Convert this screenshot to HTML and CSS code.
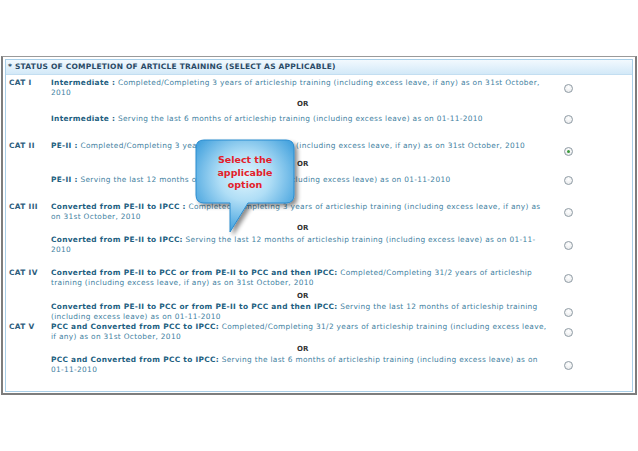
FILE: index.html
```html
<!DOCTYPE html>
<html>
<head>
<meta charset="utf-8">
<link rel="stylesheet" href="styles.css">
</head>
<body>
<div class="page">
  <div class="frame">
    <div class="box">
      <div class="head">* STATUS OF COMPLETION OF ARTICLE TRAINING (SELECT AS APPLICABLE)</div>
      <div class="rows">
        <div class="opt two mt3"><span class="cat">CAT I</span><p class="txt"><b>Intermediate :</b> Completed/Completing 3 years of articleship training (including excess leave, if any) as on 31st October,<br>2010</p><span class="radio"></span></div>
        <div class="or mt1">OR</div>
        <div class="opt mt5"><span class="cat"></span><p class="txt"><b>Intermediate :</b> Serving the last 6 months of articleship training (including excess leave) as on 01-11-2010</p><span class="radio"></span></div>

        <div class="opt two mt17"><span class="cat">CAT II</span><p class="txt top"><b>PE-II :</b> Completed/Completing 3 years of articleship training (including excess leave, if any) as on 31st October, 2010</p><span class="radio on"></span></div>
        <div class="or mtn2">OR</div>
        <div class="opt mt6"><span class="cat"></span><p class="txt"><b>PE-II :</b> Serving the last 12 months of articleship training (including excess leave) as on 01-11-2010</p><span class="radio"></span></div>

        <div class="opt two mt17"><span class="cat">CAT III</span><p class="txt"><b>Converted from PE-II to IPCC :</b> Completed/Completing 3 years of articleship training (including excess leave, if any) as<br>on 31st October, 2010</p><span class="radio"></span></div>
        <div class="or mt1">OR</div>
        <div class="opt two mt2"><span class="cat"></span><p class="txt"><b>Converted from PE-II to IPCC:</b> Serving the last 12 months of articleship training (including excess leave) as on 01-11-<br>2010</p><span class="radio"></span></div>

        <div class="opt two mt13"><span class="cat">CAT IV</span><p class="txt"><b>Converted from PE-II to PCC or from PE-II to PCC and then IPCC:</b> Completed/Completing 31/2 years of articleship<br>training (including excess leave, if any) as on 31st October, 2010</p><span class="radio"></span></div>
        <div class="or mt3">OR</div>
        <div class="opt two mt1"><span class="cat"></span><p class="txt"><b>Converted from PE-II to PCC or from PE-II to PCC and then IPCC:</b> Serving the last 12 months of articleship training<br>(including excess leave) as on 01-11-2010</p><span class="radio"></span></div>

        <div class="opt two mt0"><span class="cat">CAT V</span><p class="txt"><b>PCC and Converted from PCC to IPCC:</b> Completed/Completing 31/2 years of articleship training (including excess leave,<br>if any) as on 31st October, 2010</p><span class="radio"></span></div>
        <div class="or mt2">OR</div>
        <div class="opt two mt1"><span class="cat"></span><p class="txt"><b>PCC and Converted from PCC to IPCC:</b> Serving the last 6 months of articleship training (including excess leave) as on<br>01-11-2010</p><span class="radio"></span></div>
      </div>
    </div>
  </div>

  <div class="bubble">
    <svg class="bubble-shape" width="120" height="110" viewBox="0 0 120 110">
      <defs>
        <radialGradient id="bg" cx="50%" cy="40%" r="65%">
          <stop offset="0" stop-color="#e0f5fd"/>
          <stop offset="0.4" stop-color="#b0def6"/>
          <stop offset="1" stop-color="#3499da"/>
        </radialGradient>
        <filter id="sh" x="-20%" y="-20%" width="150%" height="150%">
          <feGaussianBlur in="SourceAlpha" stdDeviation="2"/>
          <feOffset dx="3" dy="3"/>
          <feComponentTransfer><feFuncA type="linear" slope="0.45"/></feComponentTransfer>
          <feMerge><feMergeNode/><feMergeNode in="SourceGraphic"/></feMerge>
        </filter>
      </defs>
      <path filter="url(#sh)" fill="url(#bg)" stroke="#2a8ccf" stroke-width="1"
        d="M14 5 H96 Q104 5 104 13 V60 Q104 68 96 68 H58 L40 97 L40 68 H14 Q6 68 6 60 V13 Q6 5 14 5 Z"/>
    </svg>
    <div class="bubble-text">Select the<br>applicable<br>option</div>
  </div>
</div>
</body>
</html>
```
FILE: styles.css
```css
html, body {
  margin: 0;
  padding: 0;
  background: #ffffff;
}
.page {
  position: relative;
  width: 638px;
  height: 451px;
  padding-top: 56px;
  box-sizing: border-box;
  font-family: "DejaVu Sans", Verdana, sans-serif;
}
.frame {
  margin-left: 1px;
  width: 636px;
  height: 339px;
  box-sizing: border-box;
  border-top: 1px solid #9a9a9a;
  border-left: 2px solid #7d7d7d;
  border-right: 2px solid #7d7d7d;
  border-bottom: 2px solid #7d7d7d;
  padding: 2px 2px 1px 2px;
}
.box {
  height: 100%;
  box-sizing: border-box;
  border: 1px solid #a9cfe8;
}
.head {
  height: 14px;
  line-height: 14px;
  padding-left: 2px;
  font-size: 7.5px;
  font-weight: bold;
  letter-spacing: 0.22px;
  color: #2a4a66;
  background: linear-gradient(#f2f9fe, #d3e9f8);
  border-bottom: 1px solid #c3def1;
}
.rows {
  display: flex;
  flex-direction: column;
  padding-left: 3px;
}
.opt {
  display: grid;
  grid-template-columns: 42px 499px 36px;
  align-items: center;
  min-height: 10px;
}
.opt.two {
  min-height: 20px;
}
.cat {
  align-self: start;
  font-size: 7.4px;
  font-weight: bold;
  line-height: 10px;
  color: #2d5d7d;
  letter-spacing: 0.35px;
}
.txt {
  margin: 0;
  font-size: 7.4px;
  line-height: 10px;
  color: #3f7f9f;
  letter-spacing: 0.32px;
  white-space: nowrap;
}
.txt.top {
  align-self: start;
}
.txt b {
  color: #22607f;
}
.radio {
  justify-self: center;
  width: 9px;
  height: 9px;
  box-sizing: border-box;
  border-radius: 50%;
  border: 1px solid #8f9ba4;
  background: radial-gradient(circle at 50% 35%, #ffffff, #e4e6e8);
  display: flex;
  align-items: center;
  justify-content: center;
}
.radio.on::after {
  content: "";
  width: 3px;
  height: 3px;
  border-radius: 50%;
  background: #3c9a3c;
}
.or {
  height: 10px;
  line-height: 10px;
  font-size: 7px;
  font-weight: bold;
  color: #333333;
  padding-left: 288px;
}
.mtn2 { margin-top: -2px; }
.mt0 { margin-top: 0; }
.mt1 { margin-top: 1px; }
.mt2 { margin-top: 2px; }
.mt3 { margin-top: 3px; }
.mt5 { margin-top: 5px; }
.mt6 { margin-top: 6px; }
.mt13 { margin-top: 13px; }
.mt17 { margin-top: 17px; }

.bubble {
  position: absolute;
  left: 190px;
  top: 135px;
  width: 120px;
  height: 110px;
}
.bubble-shape {
  position: absolute;
  left: 0;
  top: 0;
}
.bubble-text {
  position: absolute;
  left: 5px;
  top: 19px;
  width: 100px;
  text-align: center;
  font-family: "DejaVu Sans", Verdana, sans-serif;
  font-weight: bold;
  font-size: 9.5px;
  line-height: 12.5px;
  color: #e3202a;
}
```
